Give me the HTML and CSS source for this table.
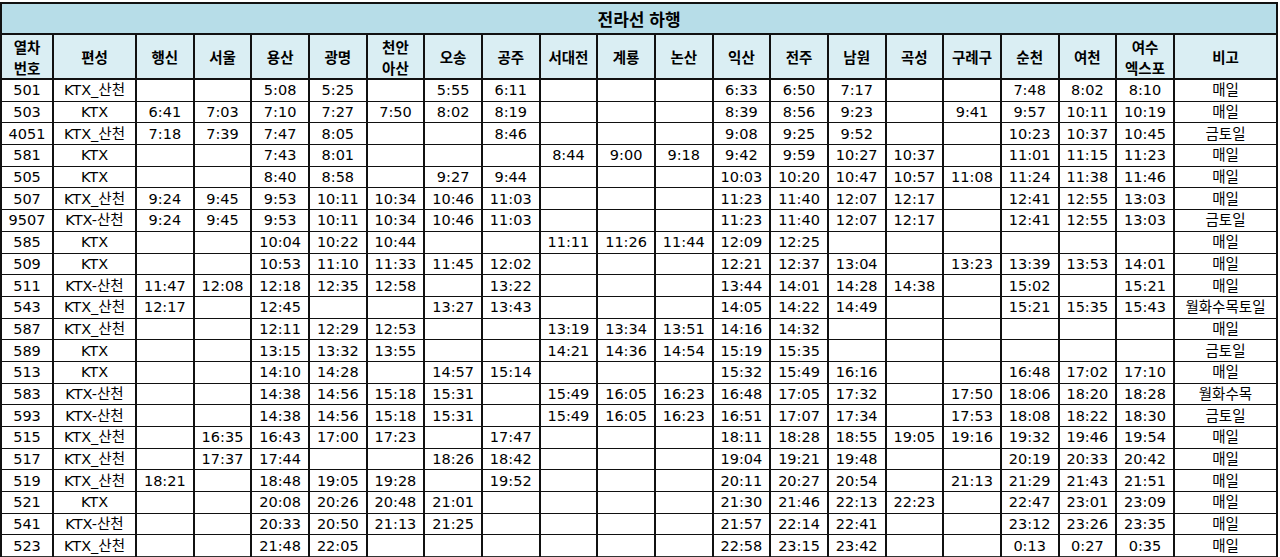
FILE: index.html
```html
<!DOCTYPE html>
<html lang="ko">
<head>
<meta charset="utf-8">
<title>전라선 하행</title>
<link rel="stylesheet" href="styles.css">
</head>
<body>
<table class="timetable">
<colgroup>
<col class="c-no"><col class="c-type">
<col class="c-st"><col class="c-st"><col class="c-st"><col class="c-st"><col class="c-st"><col class="c-st">
<col class="c-st"><col class="c-st"><col class="c-st"><col class="c-st"><col class="c-st"><col class="c-st">
<col class="c-st"><col class="c-st"><col class="c-st"><col class="c-st"><col class="c-st"><col class="c-st">
<col class="c-note">
</colgroup>
<thead>
<tr class="title-row"><th colspan="21">전라선 하행</th></tr>
<tr class="head-row">
<th>열차<br>번호</th><th>편성</th><th>행신</th><th>서울</th><th>용산</th><th>광명</th><th>천안<br>아산</th><th>오송</th><th>공주</th><th>서대전</th><th>계룡</th><th>논산</th><th>익산</th><th>전주</th><th>남원</th><th>곡성</th><th>구례구</th><th>순천</th><th>여천</th><th>여수<br>엑스포</th><th>비고</th>
</tr>
</thead>
<tbody>
<tr><td>501</td><td>KTX_산천</td><td></td><td></td><td>5:08</td><td>5:25</td><td></td><td>5:55</td><td>6:11</td><td></td><td></td><td></td><td>6:33</td><td>6:50</td><td>7:17</td><td></td><td></td><td>7:48</td><td>8:02</td><td>8:10</td><td>매일</td></tr>
<tr><td>503</td><td>KTX</td><td>6:41</td><td>7:03</td><td>7:10</td><td>7:27</td><td>7:50</td><td>8:02</td><td>8:19</td><td></td><td></td><td></td><td>8:39</td><td>8:56</td><td>9:23</td><td></td><td>9:41</td><td>9:57</td><td>10:11</td><td>10:19</td><td>매일</td></tr>
<tr><td>4051</td><td>KTX_산천</td><td>7:18</td><td>7:39</td><td>7:47</td><td>8:05</td><td></td><td></td><td>8:46</td><td></td><td></td><td></td><td>9:08</td><td>9:25</td><td>9:52</td><td></td><td></td><td>10:23</td><td>10:37</td><td>10:45</td><td>금토일</td></tr>
<tr><td>581</td><td>KTX</td><td></td><td></td><td>7:43</td><td>8:01</td><td></td><td></td><td></td><td>8:44</td><td>9:00</td><td>9:18</td><td>9:42</td><td>9:59</td><td>10:27</td><td>10:37</td><td></td><td>11:01</td><td>11:15</td><td>11:23</td><td>매일</td></tr>
<tr><td>505</td><td>KTX</td><td></td><td></td><td>8:40</td><td>8:58</td><td></td><td>9:27</td><td>9:44</td><td></td><td></td><td></td><td>10:03</td><td>10:20</td><td>10:47</td><td>10:57</td><td>11:08</td><td>11:24</td><td>11:38</td><td>11:46</td><td>매일</td></tr>
<tr><td>507</td><td>KTX_산천</td><td>9:24</td><td>9:45</td><td>9:53</td><td>10:11</td><td>10:34</td><td>10:46</td><td>11:03</td><td></td><td></td><td></td><td>11:23</td><td>11:40</td><td>12:07</td><td>12:17</td><td></td><td>12:41</td><td>12:55</td><td>13:03</td><td>매일</td></tr>
<tr><td>9507</td><td>KTX-산천</td><td>9:24</td><td>9:45</td><td>9:53</td><td>10:11</td><td>10:34</td><td>10:46</td><td>11:03</td><td></td><td></td><td></td><td>11:23</td><td>11:40</td><td>12:07</td><td>12:17</td><td></td><td>12:41</td><td>12:55</td><td>13:03</td><td>금토일</td></tr>
<tr><td>585</td><td>KTX</td><td></td><td></td><td>10:04</td><td>10:22</td><td>10:44</td><td></td><td></td><td>11:11</td><td>11:26</td><td>11:44</td><td>12:09</td><td>12:25</td><td></td><td></td><td></td><td></td><td></td><td></td><td>매일</td></tr>
<tr><td>509</td><td>KTX</td><td></td><td></td><td>10:53</td><td>11:10</td><td>11:33</td><td>11:45</td><td>12:02</td><td></td><td></td><td></td><td>12:21</td><td>12:37</td><td>13:04</td><td></td><td>13:23</td><td>13:39</td><td>13:53</td><td>14:01</td><td>매일</td></tr>
<tr><td>511</td><td>KTX-산천</td><td>11:47</td><td>12:08</td><td>12:18</td><td>12:35</td><td>12:58</td><td></td><td>13:22</td><td></td><td></td><td></td><td>13:44</td><td>14:01</td><td>14:28</td><td>14:38</td><td></td><td>15:02</td><td></td><td>15:21</td><td>매일</td></tr>
<tr><td>543</td><td>KTX_산천</td><td>12:17</td><td></td><td>12:45</td><td></td><td></td><td>13:27</td><td>13:43</td><td></td><td></td><td></td><td>14:05</td><td>14:22</td><td>14:49</td><td></td><td></td><td>15:21</td><td>15:35</td><td>15:43</td><td>월화수목토일</td></tr>
<tr><td>587</td><td>KTX_산천</td><td></td><td></td><td>12:11</td><td>12:29</td><td>12:53</td><td></td><td></td><td>13:19</td><td>13:34</td><td>13:51</td><td>14:16</td><td>14:32</td><td></td><td></td><td></td><td></td><td></td><td></td><td>매일</td></tr>
<tr><td>589</td><td>KTX</td><td></td><td></td><td>13:15</td><td>13:32</td><td>13:55</td><td></td><td></td><td>14:21</td><td>14:36</td><td>14:54</td><td>15:19</td><td>15:35</td><td></td><td></td><td></td><td></td><td></td><td></td><td>금토일</td></tr>
<tr><td>513</td><td>KTX</td><td></td><td></td><td>14:10</td><td>14:28</td><td></td><td>14:57</td><td>15:14</td><td></td><td></td><td></td><td>15:32</td><td>15:49</td><td>16:16</td><td></td><td></td><td>16:48</td><td>17:02</td><td>17:10</td><td>매일</td></tr>
<tr><td>583</td><td>KTX-산천</td><td></td><td></td><td>14:38</td><td>14:56</td><td>15:18</td><td>15:31</td><td></td><td>15:49</td><td>16:05</td><td>16:23</td><td>16:48</td><td>17:05</td><td>17:32</td><td></td><td>17:50</td><td>18:06</td><td>18:20</td><td>18:28</td><td>월화수목</td></tr>
<tr><td>593</td><td>KTX-산천</td><td></td><td></td><td>14:38</td><td>14:56</td><td>15:18</td><td>15:31</td><td></td><td>15:49</td><td>16:05</td><td>16:23</td><td>16:51</td><td>17:07</td><td>17:34</td><td></td><td>17:53</td><td>18:08</td><td>18:22</td><td>18:30</td><td>금토일</td></tr>
<tr><td>515</td><td>KTX_산천</td><td></td><td>16:35</td><td>16:43</td><td>17:00</td><td>17:23</td><td></td><td>17:47</td><td></td><td></td><td></td><td>18:11</td><td>18:28</td><td>18:55</td><td>19:05</td><td>19:16</td><td>19:32</td><td>19:46</td><td>19:54</td><td>매일</td></tr>
<tr><td>517</td><td>KTX_산천</td><td></td><td>17:37</td><td>17:44</td><td></td><td></td><td>18:26</td><td>18:42</td><td></td><td></td><td></td><td>19:04</td><td>19:21</td><td>19:48</td><td></td><td></td><td>20:19</td><td>20:33</td><td>20:42</td><td>매일</td></tr>
<tr><td>519</td><td>KTX_산천</td><td>18:21</td><td></td><td>18:48</td><td>19:05</td><td>19:28</td><td></td><td>19:52</td><td></td><td></td><td></td><td>20:11</td><td>20:27</td><td>20:54</td><td></td><td>21:13</td><td>21:29</td><td>21:43</td><td>21:51</td><td>매일</td></tr>
<tr><td>521</td><td>KTX</td><td></td><td></td><td>20:08</td><td>20:26</td><td>20:48</td><td>21:01</td><td></td><td></td><td></td><td></td><td>21:30</td><td>21:46</td><td>22:13</td><td>22:23</td><td></td><td>22:47</td><td>23:01</td><td>23:09</td><td>매일</td></tr>
<tr><td>541</td><td>KTX-산천</td><td></td><td></td><td>20:33</td><td>20:50</td><td>21:13</td><td>21:25</td><td></td><td></td><td></td><td></td><td>21:57</td><td>22:14</td><td>22:41</td><td></td><td></td><td>23:12</td><td>23:26</td><td>23:35</td><td>매일</td></tr>
<tr><td>523</td><td>KTX_산천</td><td></td><td></td><td>21:48</td><td>22:05</td><td></td><td></td><td></td><td></td><td></td><td></td><td>22:58</td><td>23:15</td><td>23:42</td><td></td><td></td><td>0:13</td><td>0:27</td><td>0:35</td><td>매일</td></tr>
</tbody>
</table>
</body>
</html>
```

FILE: styles.css
```css
html, body {
  margin: 0;
  padding: 0;
  background: #ffffff;
}

.timetable {
  border-collapse: collapse;
  table-layout: fixed;
  width: 1278px;
  margin-top: 2px;
  border: 2px solid #333333;
  font-family: "DejaVu Sans", "Noto Sans CJK KR", sans-serif;
  font-size: 14.5px;
  color: #000000;
}

.c-no { width: 52px; }
.c-type { width: 83px; }
.c-st { width: 57.67px; }
.c-note { width: 103px; }

.timetable th,
.timetable td {
  border: 2px solid #111111;
  padding: 0;
  text-align: center;
  vertical-align: middle;
  white-space: nowrap;
  overflow: hidden;
}

.timetable td {
  height: 20.7px;
  line-height: 18px;
  border-top-width: 1px;
  border-bottom-width: 1px;
}

.title-row th {
  height: 29px;
  background: #b7dde8;
  font-family: "Noto Sans CJK KR", sans-serif;
  font-size: 17px;
  font-weight: 700;
  line-height: 24px;
}

.head-row th {
  height: 43px;
  background: #daeef3;
  font-family: "Noto Sans CJK KR", sans-serif;
  font-size: 14.5px;
  font-weight: 700;
  line-height: 21px;
}
```
